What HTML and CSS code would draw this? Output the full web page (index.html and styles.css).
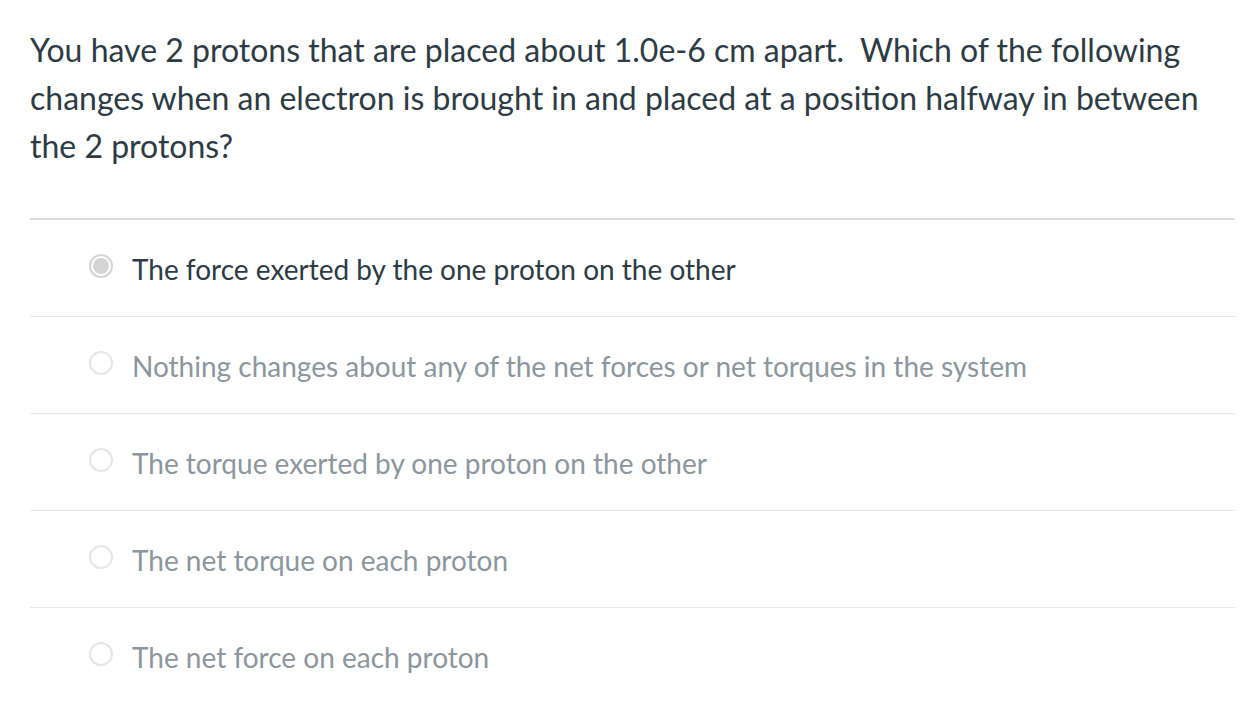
FILE: index.html
```html
<!DOCTYPE html>
<html>
<head>
<meta charset="utf-8">
<link rel="stylesheet" href="styles.css">
</head>
<body>
<div class="quiz">
  <div class="question">You have 2 protons that are placed about 1.0e-6 cm apart.&nbsp; Which of the following changes when an electron is brought in and placed at a position halfway in between the 2 protons?</div>
  <div class="answers">
    <div class="answer selected"><span class="radio"></span><span class="label">The force exerted by the one proton on the other</span></div>
    <div class="answer"><span class="radio"></span><span class="label">Nothing changes about any of the net forces or net torques in the system</span></div>
    <div class="answer"><span class="radio"></span><span class="label">The torque exerted by one proton on the other</span></div>
    <div class="answer"><span class="radio"></span><span class="label">The net torque on each proton</span></div>
    <div class="answer last"><span class="radio"></span><span class="label">The net force on each proton</span></div>
  </div>
</div>
</body>
</html>
```
FILE: styles.css
```css
html, body {
  margin: 0;
  padding: 0;
  background: #ffffff;
}
body {
  font-family: Lato, "Open Sans", "Liberation Sans", sans-serif;
  color: #2d3b45;
}
.quiz {
  padding: 26px 11px 0 30px;
}
.question {
  font-size: 32px;
  line-height: 48px;
}
.answers {
  margin-top: 48px;
  border-top: 2px solid #dcdcdc;
}
.answer {
  display: flex;
  align-items: center;
  height: 96px;
  border-bottom: 1px solid #e6e8ea;
  padding-left: 59px;
  font-size: 28px;
  color: #8b969e;
}
.answer.last {
  border-bottom: none;
}
.answer.selected {
  color: #2d3b45;
}
.label {
  padding-top: 2px;
}
.radio {
  box-sizing: border-box;
  width: 24px;
  height: 24px;
  border-radius: 50%;
  border: 2px solid #e6e6e6;
  background: #ffffff;
  margin-right: 19px;
  margin-top: -4px;
  flex: none;
  position: relative;
}
.answer.selected .radio {
  border: 2px solid #d4d4d4;
}
.answer.selected .radio::after {
  content: "";
  position: absolute;
  left: 2px;
  top: 2px;
  width: 16px;
  height: 16px;
  border-radius: 50%;
  background: #d4d4d4;
}
```
